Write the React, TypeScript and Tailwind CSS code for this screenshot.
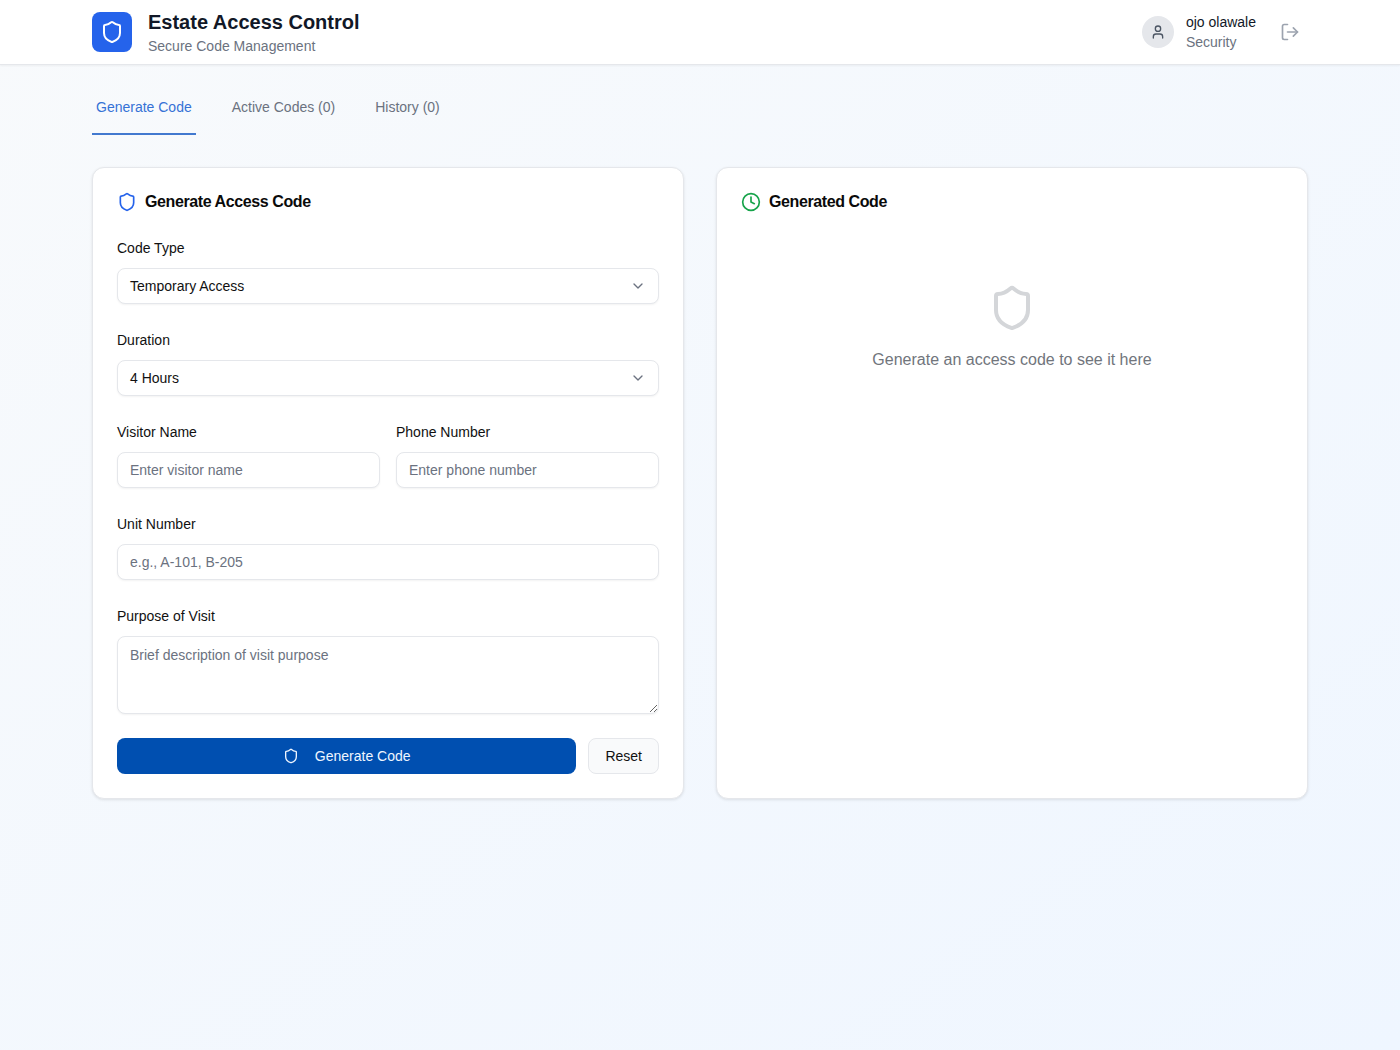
import { ChevronDown, Clock, LogOut, Shield, User } from "lucide-react";

function Label({ children }: { children: string }) {
  return <label className="block h-5 text-sm leading-5 text-[#111111]">{children}</label>;
}

function SelectBox({ value }: { value: string }) {
  return (
    <div className="mt-2.5 flex h-9 items-center justify-between rounded-lg border border-[#e5e7eb] bg-white px-3 text-sm text-[#111111] shadow-[0_1px_2px_rgba(0,0,0,0.05)]">
      <span>{value}</span>
      <ChevronDown className="h-4 w-4 text-[#6b7280]" strokeWidth={2} />
    </div>
  );
}

function TextBox({ placeholder }: { placeholder: string }) {
  return (
    <input
      placeholder={placeholder}
      className="mt-2.5 block h-9 w-full rounded-lg border border-[#e5e7eb] bg-white px-3 text-sm text-[#111111] shadow-[0_1px_2px_rgba(0,0,0,0.05)] outline-none placeholder:text-[#6b7280]"
    />
  );
}

export default function App() {
  return (
    <div className="min-h-[1050px] bg-gradient-to-br from-[#f8fafc] to-[#eff6ff] font-['Liberation_Sans',Arial,sans-serif]">
      <header className="h-[65px] border-b border-[#e5e7eb] bg-white shadow-[0_1px_2px_rgba(0,0,0,0.05)]">
        <div className="mx-auto flex h-16 max-w-7xl items-center justify-between px-8">
          <div className="flex items-center gap-4">
            <div className="flex h-10 w-10 items-center justify-center rounded-lg bg-[#2563eb]">
              <Shield className="h-6 w-6 text-white" strokeWidth={2} />
            </div>
            <div>
              <h1 className="text-xl leading-7 font-semibold text-[#111827]">Estate Access Control</h1>
              <p className="text-sm leading-5 text-[#6b7280]">Secure Code Management</p>
            </div>
          </div>
          <div className="flex items-center gap-4">
            <div className="flex items-center gap-3">
              <div className="flex h-8 w-8 items-center justify-center rounded-full bg-[#e5e7eb]">
                <User className="h-4 w-4 text-[#4b5563]" />
              </div>
              <div>
                <p className="text-sm leading-5 text-[#111827]">ojo olawale</p>
                <p className="text-sm leading-5 text-[#6b7280]">Security</p>
              </div>
            </div>
            <button className="flex h-9 w-9 items-center justify-center text-[#9ca3af]">
              <LogOut className="h-5 w-5" strokeWidth={2} />
            </button>
          </div>
        </div>
      </header>

      <main className="mx-auto max-w-7xl px-8 pt-[25px]">
        <nav className="flex items-start gap-8">
          <button className="h-[45px] border-b-2 border-[#4279cf] px-1 pb-[10px] text-sm text-[#3572d6]">Generate Code</button>
          <button className="h-[45px] px-1 pb-3 text-sm text-[#6b7280]">Active Codes (0)</button>
          <button className="h-[45px] px-1 pb-3 text-sm text-[#6b7280]">History (0)</button>
        </nav>

        <div className="mt-8 grid grid-cols-2 gap-8">
          <section className="h-[632px] rounded-xl border border-[#e5e7eb] bg-white p-6 shadow-[0_1px_3px_rgba(0,0,0,0.1)]">
            <h2 className="flex h-[20px] items-center gap-2 text-base font-semibold tracking-tight text-[#0a0a0a]">
              <Shield className="h-5 w-5 text-[#2563eb]" />
              Generate Access Code
            </h2>
            <div className="mt-[26px] space-y-[26px]">
              <div>
                <Label>Code Type</Label>
                <SelectBox value="Temporary Access" />
              </div>
              <div>
                <Label>Duration</Label>
                <SelectBox value="4 Hours" />
              </div>
              <div className="grid grid-cols-2 gap-4">
                <div>
                  <Label>Visitor Name</Label>
                  <TextBox placeholder="Enter visitor name" />
                </div>
                <div>
                  <Label>Phone Number</Label>
                  <TextBox placeholder="Enter phone number" />
                </div>
              </div>
              <div>
                <Label>Unit Number</Label>
                <TextBox placeholder="e.g., A-101, B-205" />
              </div>
              <div>
                <Label>Purpose of Visit</Label>
                <textarea
                  placeholder="Brief description of visit purpose"
                  className="mt-2.5 block h-[78px] w-full rounded-lg border border-[#e5e7eb] bg-white px-3 py-2 text-sm text-[#111111] shadow-[0_1px_2px_rgba(0,0,0,0.05)] outline-none placeholder:text-[#6b7280]"
                />
              </div>
            </div>
            <div className="mt-6 flex gap-3">
              <button className="flex h-9 flex-1 items-center justify-center gap-4 rounded-lg bg-[#004fb0] text-sm text-[#eff6ff]">
                <Shield className="h-4 w-4" />
                Generate Code
              </button>
              <button className="h-9 rounded-lg border border-[#e5e7eb] bg-[#f9fafb] px-4 text-sm text-[#111111]">Reset</button>
            </div>
          </section>

          <section className="h-[632px] rounded-xl border border-[#e5e7eb] bg-white p-6 shadow-[0_1px_3px_rgba(0,0,0,0.1)]">
            <h2 className="flex h-[20px] items-center gap-2 text-base font-semibold tracking-tight text-[#0a0a0a]">
              <Clock className="h-5 w-5 text-[#16a34a]" />
              Generated Code
            </h2>
            <div className="flex flex-col items-center pt-[72px]">
              <Shield className="h-12 w-12 text-[#d4d6d9]" />
              <p className="mt-4 text-base text-[#71757c]">Generate an access code to see it here</p>
            </div>
          </section>
        </div>
      </main>
    </div>
  );
}
